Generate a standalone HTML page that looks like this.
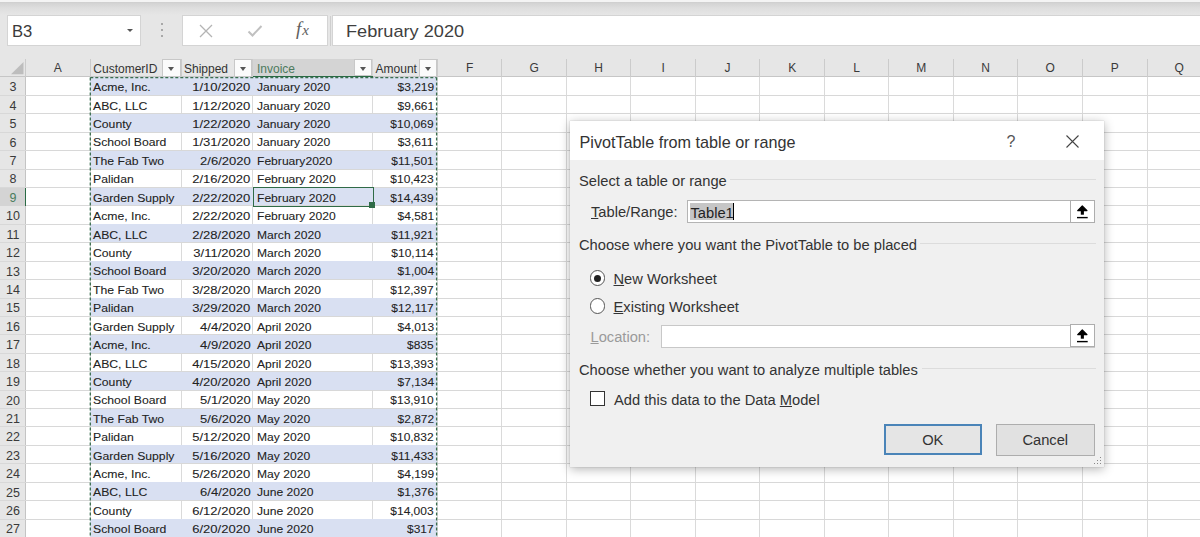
<!DOCTYPE html>
<html><head><meta charset="utf-8"><style>
*{margin:0;padding:0}
html,body{width:1200px;height:537px;overflow:hidden;background:#fff;position:relative}
body{font-family:"Liberation Sans",sans-serif}
#wrap{position:absolute;left:0;top:0;width:1200px;height:537px;overflow:hidden}
.t{position:absolute;white-space:pre;font-family:"Liberation Sans",sans-serif}
.tb{position:absolute;left:0;top:0;width:1200px;height:58.5px;background:linear-gradient(#f4f4f4 0,#f4f4f4 1.7px,#cdcdcd 1.7px,#d4d4d4 3.5px,#dedede 8px,#e6e6e6 15px,#e6e6e6 100%)}
.box{position:absolute;background:#fff;border:1px solid #d4d4d4;box-sizing:border-box}
.tri{position:absolute;width:0;height:0;border-left:3.5px solid transparent;border-right:3.5px solid transparent;border-top:3.5px solid #555}
.ch{font-size:12px;line-height:19px;text-align:center;color:#3a3a3a}
.dd{position:absolute;width:18.2px;height:17.3px;background:#fbfbfb;border:1px solid #c8c8c8;box-sizing:border-box}
.tri2{position:absolute;left:5px;top:6.5px;width:0;height:0;border-left:3.5px solid transparent;border-right:3.5px solid transparent;border-top:4px solid #555}
.rn{left:0;width:26px;text-align:center;font-size:12.5px;line-height:18.4px;color:#3a3a3a;margin-top:1.4px}
.cell{font-size:11.5px;line-height:18.4px;color:#222;transform-origin:0 0;-webkit-text-stroke:0.08px #222}
.r{text-align:right}
#dlg{position:absolute;left:569.5px;top:120.8px;width:534.3px;height:346.2px;background:#f0f0f0;box-shadow:0 2px 10px rgba(0,0,0,0.3),0 0 1px rgba(0,0,0,0.25)}
#dlg .title{position:absolute;left:0;top:0;width:100%;height:39.5px;background:#fff;font-size:16.2px;line-height:42px;padding-left:10px;box-sizing:border-box;color:#333;font-family:"Liberation Sans",sans-serif}
.lbl{font-size:14.7px;line-height:18px;color:#333}
.gl{position:absolute;height:1px;background:#dcdcdc}
.inp{position:absolute;background:#fff;border:1px solid #b4b4b4;box-sizing:border-box}
.upbtn{position:absolute;width:25px;height:23px;background:#fff;border:1px solid #adadad;box-sizing:border-box}

.radio{position:absolute;width:15.5px;height:15.5px;border:1.2px solid #555;border-radius:50%;background:#fff;box-sizing:border-box}
.radio .dot{position:absolute;left:3.25px;top:3.25px;width:7px;height:7px;border-radius:50%;background:#222}
.chk{position:absolute;width:15px;height:15px;border:1px solid #333;background:#fff;box-sizing:border-box}
.btn{position:absolute;width:98.5px;height:30.5px;background:#e1e1e1;border:1px solid #adadad;box-sizing:border-box;text-align:center;font-size:14.7px;line-height:31px;color:#333}
.btn.ok{border:2px solid #4a84b8;line-height:29px;background:#e5e5e5}
</style></head>
<body><div id="wrap">
<div class="tb"></div>
<div class="box" style="left:6.5px;top:15px;width:134.5px;height:30.8px"></div>
<div class="t" style="left:12px;top:22.3px;font-size:16.6px;color:#3a3a3a;line-height:20px">B3</div>
<div class="tri" style="left:126.5px;top:29.3px"></div>
<div style="position:absolute;left:160.5px;top:23px;width:2px;height:2px;background:#a8a8a8"></div>
<div style="position:absolute;left:160.5px;top:29.3px;width:2px;height:2px;background:#a8a8a8"></div>
<div style="position:absolute;left:160.5px;top:35px;width:2px;height:2px;background:#a8a8a8"></div>
<div class="box" style="left:182.3px;top:15px;width:145.7px;height:30.8px"></div>
<svg style="position:absolute;left:199px;top:23.5px" width="14" height="14" viewBox="0 0 14 14"><path d="M1 1L13 13M13 1L1 13" stroke="#b4b4b4" stroke-width="1.3" fill="none"/></svg>
<svg style="position:absolute;left:247px;top:23.5px" width="16" height="14" viewBox="0 0 16 14"><path d="M1.5 7.5L5.5 11.5L14.5 2" stroke="#c0c0c0" stroke-width="2" fill="none"/></svg>
<div class="t" style="left:296px;top:18.5px;font-family:'Liberation Serif',serif;font-style:italic;font-size:19px;color:#606060;line-height:20px;-webkit-text-stroke:0px #505050">f<span style="font-size:15px;margin-left:1px">x</span></div>
<div style="position:absolute;left:329.5px;top:15.5px;width:1px;height:30px;background:#cfcfcf"></div>
<div class="box" style="left:332.3px;top:15px;width:900px;height:30.8px"></div>
<div class="t" style="left:346.3px;top:22px;font-size:17px;color:#3f3f3f;line-height:20px;transform:scaleX(1.068);transform-origin:0 0">February 2020</div>
<div style="position:absolute;left:0;top:58.5px;width:1200px;height:18.5px;background:#e6e6e6;border-bottom:1px solid #c6c6c6;box-sizing:border-box"></div>
<svg style="position:absolute;left:11px;top:62.3px" width="12.5" height="12.3" viewBox="0 0 12.5 12.3"><path d="M12.5 0L12.5 12.3L0 12.3Z" fill="#bdbdbd"/></svg>
<div style="position:absolute;left:89.80px;top:58.5px;width:1px;height:18.5px;background:#cbcbcb"></div>
<div class="t ch" style="left:25.00px;width:65.30px;top:58.5px">A</div>
<div style="position:absolute;left:180.50px;top:58.5px;width:1px;height:18.5px;background:#cbcbcb"></div>
<div style="position:absolute;left:252.30px;top:58.5px;width:1px;height:18.5px;background:#cbcbcb"></div>
<div style="position:absolute;left:372.10px;top:58.5px;width:1px;height:18.5px;background:#cbcbcb"></div>
<div style="position:absolute;left:437.00px;top:58.5px;width:1px;height:18.5px;background:#cbcbcb"></div>
<div style="position:absolute;left:501.30px;top:58.5px;width:1px;height:18.5px;background:#cbcbcb"></div>
<div class="t ch" style="left:437.50px;width:64.30px;top:58.5px">F</div>
<div style="position:absolute;left:565.82px;top:58.5px;width:1px;height:18.5px;background:#cbcbcb"></div>
<div class="t ch" style="left:501.80px;width:64.52px;top:58.5px">G</div>
<div style="position:absolute;left:630.34px;top:58.5px;width:1px;height:18.5px;background:#cbcbcb"></div>
<div class="t ch" style="left:566.32px;width:64.52px;top:58.5px">H</div>
<div style="position:absolute;left:694.86px;top:58.5px;width:1px;height:18.5px;background:#cbcbcb"></div>
<div class="t ch" style="left:630.84px;width:64.52px;top:58.5px">I</div>
<div style="position:absolute;left:759.38px;top:58.5px;width:1px;height:18.5px;background:#cbcbcb"></div>
<div class="t ch" style="left:695.36px;width:64.52px;top:58.5px">J</div>
<div style="position:absolute;left:823.90px;top:58.5px;width:1px;height:18.5px;background:#cbcbcb"></div>
<div class="t ch" style="left:759.88px;width:64.52px;top:58.5px">K</div>
<div style="position:absolute;left:888.42px;top:58.5px;width:1px;height:18.5px;background:#cbcbcb"></div>
<div class="t ch" style="left:824.40px;width:64.52px;top:58.5px">L</div>
<div style="position:absolute;left:952.94px;top:58.5px;width:1px;height:18.5px;background:#cbcbcb"></div>
<div class="t ch" style="left:888.92px;width:64.52px;top:58.5px">M</div>
<div style="position:absolute;left:1017.46px;top:58.5px;width:1px;height:18.5px;background:#cbcbcb"></div>
<div class="t ch" style="left:953.44px;width:64.52px;top:58.5px">N</div>
<div style="position:absolute;left:1081.98px;top:58.5px;width:1px;height:18.5px;background:#cbcbcb"></div>
<div class="t ch" style="left:1017.96px;width:64.52px;top:58.5px">O</div>
<div style="position:absolute;left:1146.50px;top:58.5px;width:1px;height:18.5px;background:#cbcbcb"></div>
<div class="t ch" style="left:1082.48px;width:64.52px;top:58.5px">P</div>
<div style="position:absolute;left:1211.02px;top:58.5px;width:1px;height:18.5px;background:#cbcbcb"></div>
<div class="t ch" style="left:1147.00px;width:64.52px;top:58.5px">Q</div>
<div style="position:absolute;left:25px;top:58.5px;width:1px;height:18.5px;background:#cbcbcb"></div>
<div style="position:absolute;left:253.30px;top:58.5px;width:119.80px;height:18.5px;background:#d4d4d4;border-bottom:1.6px solid #2a6b45;box-sizing:border-box"></div>
<div class="t" style="left:93.30px;top:60.5px;font-size:12px;line-height:16px;color:#333">CustomerID</div>
<div class="dd" style="left:162.40px;top:59.3px;height:17.3px"><div class="tri2"></div></div>
<div class="t" style="left:184.00px;top:60.5px;font-size:12px;line-height:16px;color:#333">Shipped</div>
<div class="dd" style="left:234.20px;top:59.3px;height:17.3px"><div class="tri2"></div></div>
<div class="t" style="left:257.00px;top:60.5px;font-size:12px;line-height:16px;color:#4d7a5d">Invoice</div>
<div class="dd" style="left:354.00px;top:59.3px;height:16.3px"><div class="tri2"></div></div>
<div class="t" style="left:375.60px;top:60.5px;font-size:12px;line-height:16px;color:#333">Amount</div>
<div class="dd" style="left:418.90px;top:59.3px;height:17.3px"><div class="tri2"></div></div>
<div style="position:absolute;left:0;top:77.0px;width:26px;height:460.0px;background:#e6e6e6;border-right:1px solid #c4c4c4;box-sizing:border-box"></div>
<div style="position:absolute;left:89.80px;top:77.0px;width:1px;height:460.0px;background:#dadada"></div>
<div style="position:absolute;left:180.50px;top:77.0px;width:1px;height:460.0px;background:#dadada"></div>
<div style="position:absolute;left:252.30px;top:77.0px;width:1px;height:460.0px;background:#dadada"></div>
<div style="position:absolute;left:372.10px;top:77.0px;width:1px;height:460.0px;background:#dadada"></div>
<div style="position:absolute;left:437.00px;top:77.0px;width:1px;height:460.0px;background:#dadada"></div>
<div style="position:absolute;left:501.30px;top:77.0px;width:1px;height:460.0px;background:#dadada"></div>
<div style="position:absolute;left:565.82px;top:77.0px;width:1px;height:460.0px;background:#dadada"></div>
<div style="position:absolute;left:630.34px;top:77.0px;width:1px;height:460.0px;background:#dadada"></div>
<div style="position:absolute;left:694.86px;top:77.0px;width:1px;height:460.0px;background:#dadada"></div>
<div style="position:absolute;left:759.38px;top:77.0px;width:1px;height:460.0px;background:#dadada"></div>
<div style="position:absolute;left:823.90px;top:77.0px;width:1px;height:460.0px;background:#dadada"></div>
<div style="position:absolute;left:888.42px;top:77.0px;width:1px;height:460.0px;background:#dadada"></div>
<div style="position:absolute;left:952.94px;top:77.0px;width:1px;height:460.0px;background:#dadada"></div>
<div style="position:absolute;left:1017.46px;top:77.0px;width:1px;height:460.0px;background:#dadada"></div>
<div style="position:absolute;left:1081.98px;top:77.0px;width:1px;height:460.0px;background:#dadada"></div>
<div style="position:absolute;left:1146.50px;top:77.0px;width:1px;height:460.0px;background:#dadada"></div>
<div style="position:absolute;left:1211.02px;top:77.0px;width:1px;height:460.0px;background:#dadada"></div>
<div style="position:absolute;left:90.30px;top:77.00px;width:347.20px;height:18.42px;background:#d9e0f2"></div>
<div style="position:absolute;left:0;top:94.92px;width:1200px;height:1px;background:#d8d8d8"></div>
<div class="t rn" style="top:77.00px">3</div>
<div class="t cell" style="left:93.30px;top:78.20px;transform:scaleX(1.062)">Acme, Inc.</div>
<div class="t cell" style="right:949.50px;top:78.20px;transform:scaleX(1.134);transform-origin:100% 0">1/10/2020</div>
<div class="t cell" style="left:256.60px;top:78.20px;transform:scaleX(1.052)">January 2020</div>
<div class="t cell" style="right:766.30px;top:78.20px;transform:scaleX(1.04);transform-origin:100% 0">$3,219</div>
<div style="position:absolute;left:0;top:113.34px;width:1200px;height:1px;background:#d8d8d8"></div>
<div class="t rn" style="top:95.42px">4</div>
<div class="t cell" style="left:93.30px;top:96.62px;transform:scaleX(1.062)">ABC, LLC</div>
<div class="t cell" style="right:949.50px;top:96.62px;transform:scaleX(1.134);transform-origin:100% 0">1/12/2020</div>
<div class="t cell" style="left:256.60px;top:96.62px;transform:scaleX(1.052)">January 2020</div>
<div class="t cell" style="right:766.30px;top:96.62px;transform:scaleX(1.04);transform-origin:100% 0">$9,661</div>
<div style="position:absolute;left:90.30px;top:113.84px;width:347.20px;height:18.42px;background:#d9e0f2"></div>
<div style="position:absolute;left:0;top:131.76px;width:1200px;height:1px;background:#d8d8d8"></div>
<div class="t rn" style="top:113.84px">5</div>
<div class="t cell" style="left:93.30px;top:115.04px;transform:scaleX(1.062)">County</div>
<div class="t cell" style="right:949.50px;top:115.04px;transform:scaleX(1.134);transform-origin:100% 0">1/22/2020</div>
<div class="t cell" style="left:256.60px;top:115.04px;transform:scaleX(1.052)">January 2020</div>
<div class="t cell" style="right:766.30px;top:115.04px;transform:scaleX(1.04);transform-origin:100% 0">$10,069</div>
<div style="position:absolute;left:0;top:150.18px;width:1200px;height:1px;background:#d8d8d8"></div>
<div class="t rn" style="top:132.26px">6</div>
<div class="t cell" style="left:93.30px;top:133.46px;transform:scaleX(1.062)">School Board</div>
<div class="t cell" style="right:949.50px;top:133.46px;transform:scaleX(1.134);transform-origin:100% 0">1/31/2020</div>
<div class="t cell" style="left:256.60px;top:133.46px;transform:scaleX(1.052)">January 2020</div>
<div class="t cell" style="right:766.30px;top:133.46px;transform:scaleX(1.04);transform-origin:100% 0">$3,611</div>
<div style="position:absolute;left:90.30px;top:150.68px;width:347.20px;height:18.42px;background:#d9e0f2"></div>
<div style="position:absolute;left:0;top:168.60px;width:1200px;height:1px;background:#d8d8d8"></div>
<div class="t rn" style="top:150.68px">7</div>
<div class="t cell" style="left:93.30px;top:151.88px;transform:scaleX(1.062)">The Fab Two</div>
<div class="t cell" style="right:949.50px;top:151.88px;transform:scaleX(1.134);transform-origin:100% 0">2/6/2020</div>
<div class="t cell" style="left:256.60px;top:151.88px;transform:scaleX(1.052)">February2020</div>
<div class="t cell" style="right:766.30px;top:151.88px;transform:scaleX(1.04);transform-origin:100% 0">$11,501</div>
<div style="position:absolute;left:0;top:187.02px;width:1200px;height:1px;background:#d8d8d8"></div>
<div class="t rn" style="top:169.10px">8</div>
<div class="t cell" style="left:93.30px;top:170.30px;transform:scaleX(1.062)">Palidan</div>
<div class="t cell" style="right:949.50px;top:170.30px;transform:scaleX(1.134);transform-origin:100% 0">2/16/2020</div>
<div class="t cell" style="left:256.60px;top:170.30px;transform:scaleX(1.052)">February 2020</div>
<div class="t cell" style="right:766.30px;top:170.30px;transform:scaleX(1.04);transform-origin:100% 0">$10,423</div>
<div style="position:absolute;left:90.30px;top:187.52px;width:347.20px;height:18.42px;background:#d9e0f2"></div>
<div style="position:absolute;left:0;top:205.44px;width:1200px;height:1px;background:#d8d8d8"></div>
<div class="t rn" style="top:187.52px">9</div>
<div class="t cell" style="left:93.30px;top:188.72px;transform:scaleX(1.062)">Garden Supply</div>
<div class="t cell" style="right:949.50px;top:188.72px;transform:scaleX(1.134);transform-origin:100% 0">2/22/2020</div>
<div class="t cell" style="left:256.60px;top:188.72px;transform:scaleX(1.052)">February 2020</div>
<div class="t cell" style="right:766.30px;top:188.72px;transform:scaleX(1.04);transform-origin:100% 0">$14,439</div>
<div style="position:absolute;left:0;top:223.86px;width:1200px;height:1px;background:#d8d8d8"></div>
<div class="t rn" style="top:205.94px">10</div>
<div class="t cell" style="left:93.30px;top:207.14px;transform:scaleX(1.062)">Acme, Inc.</div>
<div class="t cell" style="right:949.50px;top:207.14px;transform:scaleX(1.134);transform-origin:100% 0">2/22/2020</div>
<div class="t cell" style="left:256.60px;top:207.14px;transform:scaleX(1.052)">February 2020</div>
<div class="t cell" style="right:766.30px;top:207.14px;transform:scaleX(1.04);transform-origin:100% 0">$4,581</div>
<div style="position:absolute;left:90.30px;top:224.36px;width:347.20px;height:18.42px;background:#d9e0f2"></div>
<div style="position:absolute;left:0;top:242.28px;width:1200px;height:1px;background:#d8d8d8"></div>
<div class="t rn" style="top:224.36px">11</div>
<div class="t cell" style="left:93.30px;top:225.56px;transform:scaleX(1.062)">ABC, LLC</div>
<div class="t cell" style="right:949.50px;top:225.56px;transform:scaleX(1.134);transform-origin:100% 0">2/28/2020</div>
<div class="t cell" style="left:256.60px;top:225.56px;transform:scaleX(1.052)">March 2020</div>
<div class="t cell" style="right:766.30px;top:225.56px;transform:scaleX(1.04);transform-origin:100% 0">$11,921</div>
<div style="position:absolute;left:0;top:260.70px;width:1200px;height:1px;background:#d8d8d8"></div>
<div class="t rn" style="top:242.78px">12</div>
<div class="t cell" style="left:93.30px;top:243.98px;transform:scaleX(1.062)">County</div>
<div class="t cell" style="right:949.50px;top:243.98px;transform:scaleX(1.134);transform-origin:100% 0">3/11/2020</div>
<div class="t cell" style="left:256.60px;top:243.98px;transform:scaleX(1.052)">March 2020</div>
<div class="t cell" style="right:766.30px;top:243.98px;transform:scaleX(1.04);transform-origin:100% 0">$10,114</div>
<div style="position:absolute;left:90.30px;top:261.20px;width:347.20px;height:18.42px;background:#d9e0f2"></div>
<div style="position:absolute;left:0;top:279.12px;width:1200px;height:1px;background:#d8d8d8"></div>
<div class="t rn" style="top:261.20px">13</div>
<div class="t cell" style="left:93.30px;top:262.40px;transform:scaleX(1.062)">School Board</div>
<div class="t cell" style="right:949.50px;top:262.40px;transform:scaleX(1.134);transform-origin:100% 0">3/20/2020</div>
<div class="t cell" style="left:256.60px;top:262.40px;transform:scaleX(1.052)">March 2020</div>
<div class="t cell" style="right:766.30px;top:262.40px;transform:scaleX(1.04);transform-origin:100% 0">$1,004</div>
<div style="position:absolute;left:0;top:297.54px;width:1200px;height:1px;background:#d8d8d8"></div>
<div class="t rn" style="top:279.62px">14</div>
<div class="t cell" style="left:93.30px;top:280.82px;transform:scaleX(1.062)">The Fab Two</div>
<div class="t cell" style="right:949.50px;top:280.82px;transform:scaleX(1.134);transform-origin:100% 0">3/28/2020</div>
<div class="t cell" style="left:256.60px;top:280.82px;transform:scaleX(1.052)">March 2020</div>
<div class="t cell" style="right:766.30px;top:280.82px;transform:scaleX(1.04);transform-origin:100% 0">$12,397</div>
<div style="position:absolute;left:90.30px;top:298.04px;width:347.20px;height:18.42px;background:#d9e0f2"></div>
<div style="position:absolute;left:0;top:315.96px;width:1200px;height:1px;background:#d8d8d8"></div>
<div class="t rn" style="top:298.04px">15</div>
<div class="t cell" style="left:93.30px;top:299.24px;transform:scaleX(1.062)">Palidan</div>
<div class="t cell" style="right:949.50px;top:299.24px;transform:scaleX(1.134);transform-origin:100% 0">3/29/2020</div>
<div class="t cell" style="left:256.60px;top:299.24px;transform:scaleX(1.052)">March 2020</div>
<div class="t cell" style="right:766.30px;top:299.24px;transform:scaleX(1.04);transform-origin:100% 0">$12,117</div>
<div style="position:absolute;left:0;top:334.38px;width:1200px;height:1px;background:#d8d8d8"></div>
<div class="t rn" style="top:316.46px">16</div>
<div class="t cell" style="left:93.30px;top:317.66px;transform:scaleX(1.062)">Garden Supply</div>
<div class="t cell" style="right:949.50px;top:317.66px;transform:scaleX(1.134);transform-origin:100% 0">4/4/2020</div>
<div class="t cell" style="left:256.60px;top:317.66px;transform:scaleX(1.052)">April 2020</div>
<div class="t cell" style="right:766.30px;top:317.66px;transform:scaleX(1.04);transform-origin:100% 0">$4,013</div>
<div style="position:absolute;left:90.30px;top:334.88px;width:347.20px;height:18.42px;background:#d9e0f2"></div>
<div style="position:absolute;left:0;top:352.80px;width:1200px;height:1px;background:#d8d8d8"></div>
<div class="t rn" style="top:334.88px">17</div>
<div class="t cell" style="left:93.30px;top:336.08px;transform:scaleX(1.062)">Acme, Inc.</div>
<div class="t cell" style="right:949.50px;top:336.08px;transform:scaleX(1.134);transform-origin:100% 0">4/9/2020</div>
<div class="t cell" style="left:256.60px;top:336.08px;transform:scaleX(1.052)">April 2020</div>
<div class="t cell" style="right:766.30px;top:336.08px;transform:scaleX(1.04);transform-origin:100% 0">$835</div>
<div style="position:absolute;left:0;top:371.22px;width:1200px;height:1px;background:#d8d8d8"></div>
<div class="t rn" style="top:353.30px">18</div>
<div class="t cell" style="left:93.30px;top:354.50px;transform:scaleX(1.062)">ABC, LLC</div>
<div class="t cell" style="right:949.50px;top:354.50px;transform:scaleX(1.134);transform-origin:100% 0">4/15/2020</div>
<div class="t cell" style="left:256.60px;top:354.50px;transform:scaleX(1.052)">April 2020</div>
<div class="t cell" style="right:766.30px;top:354.50px;transform:scaleX(1.04);transform-origin:100% 0">$13,393</div>
<div style="position:absolute;left:90.30px;top:371.72px;width:347.20px;height:18.42px;background:#d9e0f2"></div>
<div style="position:absolute;left:0;top:389.64px;width:1200px;height:1px;background:#d8d8d8"></div>
<div class="t rn" style="top:371.72px">19</div>
<div class="t cell" style="left:93.30px;top:372.92px;transform:scaleX(1.062)">County</div>
<div class="t cell" style="right:949.50px;top:372.92px;transform:scaleX(1.134);transform-origin:100% 0">4/20/2020</div>
<div class="t cell" style="left:256.60px;top:372.92px;transform:scaleX(1.052)">April 2020</div>
<div class="t cell" style="right:766.30px;top:372.92px;transform:scaleX(1.04);transform-origin:100% 0">$7,134</div>
<div style="position:absolute;left:0;top:408.06px;width:1200px;height:1px;background:#d8d8d8"></div>
<div class="t rn" style="top:390.14px">20</div>
<div class="t cell" style="left:93.30px;top:391.34px;transform:scaleX(1.062)">School Board</div>
<div class="t cell" style="right:949.50px;top:391.34px;transform:scaleX(1.134);transform-origin:100% 0">5/1/2020</div>
<div class="t cell" style="left:256.60px;top:391.34px;transform:scaleX(1.052)">May 2020</div>
<div class="t cell" style="right:766.30px;top:391.34px;transform:scaleX(1.04);transform-origin:100% 0">$13,910</div>
<div style="position:absolute;left:90.30px;top:408.56px;width:347.20px;height:18.42px;background:#d9e0f2"></div>
<div style="position:absolute;left:0;top:426.48px;width:1200px;height:1px;background:#d8d8d8"></div>
<div class="t rn" style="top:408.56px">21</div>
<div class="t cell" style="left:93.30px;top:409.76px;transform:scaleX(1.062)">The Fab Two</div>
<div class="t cell" style="right:949.50px;top:409.76px;transform:scaleX(1.134);transform-origin:100% 0">5/6/2020</div>
<div class="t cell" style="left:256.60px;top:409.76px;transform:scaleX(1.052)">May 2020</div>
<div class="t cell" style="right:766.30px;top:409.76px;transform:scaleX(1.04);transform-origin:100% 0">$2,872</div>
<div style="position:absolute;left:0;top:444.90px;width:1200px;height:1px;background:#d8d8d8"></div>
<div class="t rn" style="top:426.98px">22</div>
<div class="t cell" style="left:93.30px;top:428.18px;transform:scaleX(1.062)">Palidan</div>
<div class="t cell" style="right:949.50px;top:428.18px;transform:scaleX(1.134);transform-origin:100% 0">5/12/2020</div>
<div class="t cell" style="left:256.60px;top:428.18px;transform:scaleX(1.052)">May 2020</div>
<div class="t cell" style="right:766.30px;top:428.18px;transform:scaleX(1.04);transform-origin:100% 0">$10,832</div>
<div style="position:absolute;left:90.30px;top:445.40px;width:347.20px;height:18.42px;background:#d9e0f2"></div>
<div style="position:absolute;left:0;top:463.32px;width:1200px;height:1px;background:#d8d8d8"></div>
<div class="t rn" style="top:445.40px">23</div>
<div class="t cell" style="left:93.30px;top:446.60px;transform:scaleX(1.062)">Garden Supply</div>
<div class="t cell" style="right:949.50px;top:446.60px;transform:scaleX(1.134);transform-origin:100% 0">5/16/2020</div>
<div class="t cell" style="left:256.60px;top:446.60px;transform:scaleX(1.052)">May 2020</div>
<div class="t cell" style="right:766.30px;top:446.60px;transform:scaleX(1.04);transform-origin:100% 0">$11,433</div>
<div style="position:absolute;left:0;top:481.74px;width:1200px;height:1px;background:#d8d8d8"></div>
<div class="t rn" style="top:463.82px">24</div>
<div class="t cell" style="left:93.30px;top:465.02px;transform:scaleX(1.062)">Acme, Inc.</div>
<div class="t cell" style="right:949.50px;top:465.02px;transform:scaleX(1.134);transform-origin:100% 0">5/26/2020</div>
<div class="t cell" style="left:256.60px;top:465.02px;transform:scaleX(1.052)">May 2020</div>
<div class="t cell" style="right:766.30px;top:465.02px;transform:scaleX(1.04);transform-origin:100% 0">$4,199</div>
<div style="position:absolute;left:90.30px;top:482.24px;width:347.20px;height:18.42px;background:#d9e0f2"></div>
<div style="position:absolute;left:0;top:500.16px;width:1200px;height:1px;background:#d8d8d8"></div>
<div class="t rn" style="top:482.24px">25</div>
<div class="t cell" style="left:93.30px;top:483.44px;transform:scaleX(1.062)">ABC, LLC</div>
<div class="t cell" style="right:949.50px;top:483.44px;transform:scaleX(1.134);transform-origin:100% 0">6/4/2020</div>
<div class="t cell" style="left:256.60px;top:483.44px;transform:scaleX(1.052)">June 2020</div>
<div class="t cell" style="right:766.30px;top:483.44px;transform:scaleX(1.04);transform-origin:100% 0">$1,376</div>
<div style="position:absolute;left:0;top:518.58px;width:1200px;height:1px;background:#d8d8d8"></div>
<div class="t rn" style="top:500.66px">26</div>
<div class="t cell" style="left:93.30px;top:501.86px;transform:scaleX(1.062)">County</div>
<div class="t cell" style="right:949.50px;top:501.86px;transform:scaleX(1.134);transform-origin:100% 0">6/12/2020</div>
<div class="t cell" style="left:256.60px;top:501.86px;transform:scaleX(1.052)">June 2020</div>
<div class="t cell" style="right:766.30px;top:501.86px;transform:scaleX(1.04);transform-origin:100% 0">$14,003</div>
<div style="position:absolute;left:90.30px;top:519.08px;width:347.20px;height:18.42px;background:#d9e0f2"></div>
<div style="position:absolute;left:0;top:537.00px;width:1200px;height:1px;background:#d8d8d8"></div>
<div class="t rn" style="top:519.08px">27</div>
<div class="t cell" style="left:93.30px;top:520.28px;transform:scaleX(1.062)">School Board</div>
<div class="t cell" style="right:949.50px;top:520.28px;transform:scaleX(1.134);transform-origin:100% 0">6/20/2020</div>
<div class="t cell" style="left:256.60px;top:520.28px;transform:scaleX(1.052)">June 2020</div>
<div class="t cell" style="right:766.30px;top:520.28px;transform:scaleX(1.04);transform-origin:100% 0">$317</div>
<div style="position:absolute;left:0;top:187.52px;width:26px;height:18.42px;background:#d4d4d4;border-right:1.6px solid #2a6b45;box-sizing:border-box"></div>
<div class="t rn" style="top:187.52px;color:#4b7d5c">9</div>
<div style="position:absolute;left:252.5px;top:186.6px;width:121.5px;height:20.4px;border:1.8px solid #2f6b47;box-sizing:border-box"></div>
<div style="position:absolute;left:369.3px;top:202.3px;width:5.8px;height:5.6px;background:#2f6b47"></div>
<svg style="position:absolute;left:0;top:0" width="1200" height="537"><g stroke="#3a6e4e" stroke-width="1.3" stroke-dasharray="3 2" fill="none"><path d="M90.3 77.6H436.6"/><path d="M90.3 77.6V537"/><path d="M436.6 77.6V537"/></g></svg>

<div id="dlg">
  <div class="title">PivotTable from table or range</div>
  <div class="t" style="left:437px;top:12.5px;font-size:16px;color:#555">?</div>
  <svg style="position:absolute;left:496px;top:14px" width="13" height="13" viewBox="0 0 13 13"><path d="M0.5 0.5L12.5 12.5M12.5 0.5L0.5 12.5" stroke="#444" stroke-width="1.1" fill="none"/></svg>
  <div class="body"></div>
  <div class="t lbl" style="left:9.5px;top:51.5px">Select a table or range</div>
  <div class="gl" style="left:160px;top:58.5px;width:366px"></div>
  <div class="t lbl" style="left:21.5px;top:82px"><u>T</u>able/Range:</div>
  <div class="inp" style="left:117.5px;top:79px;width:408px;height:23px"></div>
  <div style="position:absolute;left:120px;top:82px;width:43px;height:17px;background:#c6c6c6"></div>
  <div class="t lbl" style="left:121px;top:83.5px;color:#222">Table1</div>
  <div style="position:absolute;left:163px;top:82px;width:1px;height:17px;background:#000"></div>
  <div class="upbtn" style="left:500.8px;top:78.9px"><svg style="position:absolute;left:0;top:0" width="25" height="23" viewBox="0 0 25 23"><path d="M11.3 5L6.7 9.6L16 9.6Z" fill="#000" stroke="#000" stroke-width="1.2" stroke-linejoin="round"/><rect x="9.8" y="8.5" width="3.1" height="5.2" fill="#000"/><rect x="6" y="15.9" width="10.7" height="1.4" fill="#000"/></svg></div>
  <div class="t lbl" style="left:9.5px;top:115.5px">Choose where you want the PivotTable to be placed</div>
  <div class="gl" style="left:350px;top:122.5px;width:176px"></div>
  <div class="radio" style="left:20px;top:149.5px"><div class="dot"></div></div>
  <div class="t lbl" style="left:44px;top:149.5px"><u>N</u>ew Worksheet</div>
  <div class="radio" style="left:20px;top:177.5px"></div>
  <div class="t lbl" style="left:44px;top:177.5px"><u>E</u>xisting Worksheet</div>
  <div class="t lbl" style="left:21px;top:207.5px;color:#9a9a9a"><u>L</u>ocation:</div>
  <div class="inp" style="left:91.5px;top:204px;width:434px;height:23px;border-color:#c8c8c8"></div>
  <div class="upbtn" style="left:500.8px;top:203.5px"><svg style="position:absolute;left:0;top:0" width="25" height="23" viewBox="0 0 25 23"><path d="M11.3 5L6.7 9.6L16 9.6Z" fill="#000" stroke="#000" stroke-width="1.2" stroke-linejoin="round"/><rect x="9.8" y="8.5" width="3.1" height="5.2" fill="#000"/><rect x="6" y="15.9" width="10.7" height="1.4" fill="#000"/></svg></div>
  <div class="t lbl" style="left:9.5px;top:240.5px">Choose whether you want to analyze multiple tables</div>
  <div class="gl" style="left:352px;top:247.5px;width:174px"></div>
  <div class="chk" style="left:20px;top:270px"></div>
  <div class="t lbl" style="left:44.5px;top:270px">Add this data to the Data <u>M</u>odel</div>
  <div class="btn ok" style="left:314px;top:303.5px">OK</div>
  <div class="btn" style="left:426.5px;top:303.5px;height:31.5px">Cancel</div>
  <div style="position:absolute;left:530.5px;top:336px;width:1.4px;height:1.4px;background:#888"></div>
  <div style="position:absolute;left:527.3px;top:339.3px;width:1.4px;height:1.4px;background:#888"></div>
  <div style="position:absolute;left:530.5px;top:339.3px;width:1.4px;height:1.4px;background:#888"></div>
  <div style="position:absolute;left:524.1px;top:342.2px;width:1.4px;height:1.4px;background:#888"></div>
  <div style="position:absolute;left:527.3px;top:342.2px;width:1.4px;height:1.4px;background:#888"></div>
  <div style="position:absolute;left:530.5px;top:342.2px;width:1.4px;height:1.4px;background:#888"></div>
</div>

</div></body></html>
